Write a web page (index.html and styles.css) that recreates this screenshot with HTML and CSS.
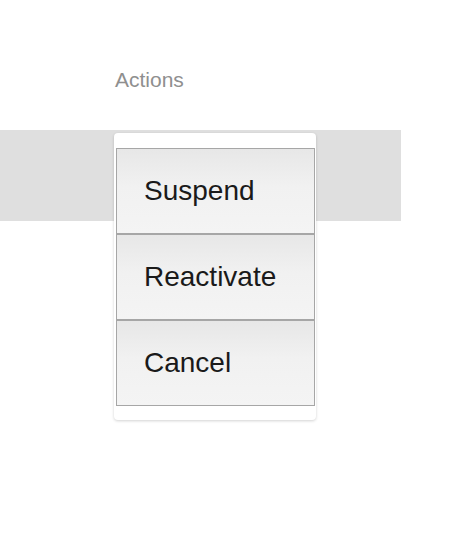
FILE: index.html
```html
<!DOCTYPE html>
<html>
<head>
<meta charset="utf-8">
<link rel="stylesheet" href="styles.css">
</head>
<body>
<div class="page">
  <div class="label">Actions</div>
  <div class="band"></div>
  <div class="menu">
    <div class="menu-item">Suspend</div>
    <div class="menu-item">Reactivate</div>
    <div class="menu-item">Cancel</div>
  </div>
</div>
</body>
</html>
```
FILE: styles.css
```css
html, body {
  margin: 0;
  padding: 0;
  background: #ffffff;
}
.page {
  position: relative;
  width: 474px;
  height: 540px;
  font-family: "Liberation Sans", Arial, Helvetica, sans-serif;
}
.label {
  padding-top: 68px;
  padding-left: 115px;
  font-size: 21px;
  line-height: 24px;
  color: #8f8f8f;
}
.band {
  margin-top: 38px;
  width: 401px;
  height: 91px;
  background: #dfdfdf;
}
.menu {
  position: absolute;
  left: 114px;
  top: 133px;
  width: 202px;
  padding: 15px 1px 14px 2px;
  box-sizing: border-box;
  background: #ffffff;
  border-radius: 4px;
  box-shadow: 0 1px 3px rgba(0, 0, 0, 0.18);
}
.menu-item {
  height: 84px;
  border: 1px solid #a6a6a6;
  background: linear-gradient(to bottom, #e7e7e7 0%, #f1f1f1 45%, #f4f4f4 100%);
  display: flex;
  align-items: center;
  padding-left: 27px;
  font-size: 28px;
  color: #1a1a1a;
}
```
